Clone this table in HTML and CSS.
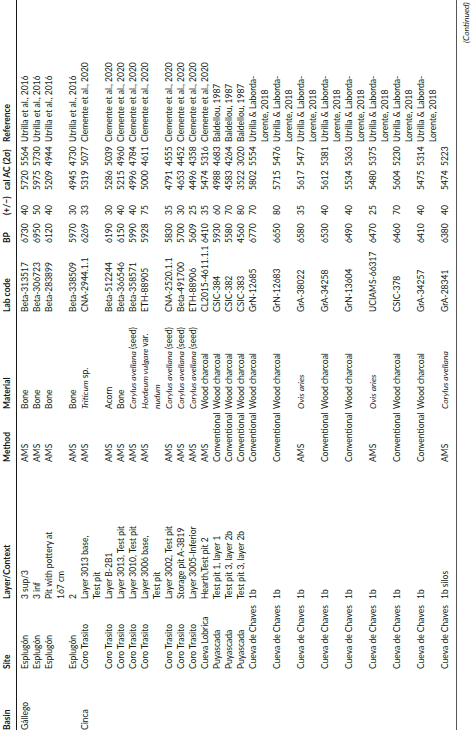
FILE: index.html
```
<!DOCTYPE html>
<html lang="en">
<head>
<meta charset="utf-8">
<title>Radiocarbon dates</title>
<link rel="stylesheet" href="styles.css">
</head>
<body>
<div class="page">
  <div class="dates">
    <div class="row head">
      <div>Basin</div><div>Site</div><div>Layer/Context</div><div>Method</div><div>Material</div><div>Lab code</div><div>BP</div><div>(+/−)</div><div class="span2">cal AC (2σ)</div><div>Reference</div>
    </div>
    <div class="row first"><div>Gállego</div><div>Esplugón</div><div>3 sup/3</div><div>AMS</div><div>Bone</div><div>Beta-313517</div><div>6730</div><div>40</div><div>5720</div><div>5564</div><div>Utrilla et al., 2016</div></div>
    <div class="row"><div></div><div>Esplugón</div><div>3 inf</div><div>AMS</div><div>Bone</div><div>Beta-306723</div><div>6950</div><div>50</div><div>5975</div><div>5730</div><div>Utrilla et al., 2016</div></div>
    <div class="row"><div></div><div>Esplugón</div><div>Pit with pottery at<br>167 cm</div><div>AMS</div><div>Bone</div><div>Beta-283899</div><div>6120</div><div>40</div><div>5209</div><div>4944</div><div>Utrilla et al., 2016</div></div>
    <div class="row"><div></div><div>Esplugón</div><div>2</div><div>AMS</div><div>Bone</div><div>Beta-338509</div><div>5970</div><div>30</div><div>4945</div><div>4730</div><div>Utrilla et al., 2016</div></div>
    <div class="row"><div>Cinca</div><div>Coro Trasito</div><div>Layer 3013 base,<br>Test pit</div><div>AMS</div><div><i>Triticum</i> sp.</div><div>CNA-2944.1.1</div><div>6269</div><div>33</div><div>5319</div><div>5077</div><div>Clemente et al., 2020</div></div>
    <div class="row"><div></div><div>Coro Trasito</div><div>Layer B-2B1</div><div>AMS</div><div>Acorn</div><div>Beta-512244</div><div>6190</div><div>30</div><div>5286</div><div>5039</div><div>Clemente et al., 2020</div></div>
    <div class="row"><div></div><div>Coro Trasito</div><div>Layer 3013, Test pit</div><div>AMS</div><div>Bone</div><div>Beta-366546</div><div>6150</div><div>40</div><div>5215</div><div>4960</div><div>Clemente et al., 2020</div></div>
    <div class="row"><div></div><div>Coro Trasito</div><div>Layer 3010, Test pit</div><div>AMS</div><div><i>Corylus avellana</i> (seed)</div><div>Beta-358571</div><div>5990</div><div>40</div><div>4996</div><div>4784</div><div>Clemente et al., 2020</div></div>
    <div class="row"><div></div><div>Coro Trasito</div><div>Layer 3006 base,<br>Test pit</div><div>AMS</div><div><i>Hordeum vulgare</i> var.<br><i>nudum</i></div><div>ETH-88905</div><div>5928</div><div>75</div><div>5000</div><div>4611</div><div>Clemente et al., 2020</div></div>
    <div class="row"><div></div><div>Coro Trasito</div><div>Layer 3002, Test pit</div><div>AMS</div><div><i>Corylus avellana</i> (seed)</div><div>CNA-2520.1.1</div><div>5830</div><div>35</div><div>4791</div><div>4555</div><div>Clemente et al., 2020</div></div>
    <div class="row"><div></div><div>Coro Trasito</div><div>Storage pit A-3B19</div><div>AMS</div><div><i>Corylus avellana</i> (seed)</div><div>Beta-491700</div><div>5700</div><div>30</div><div>4653</div><div>4452</div><div>Clemente et al., 2020</div></div>
    <div class="row"><div></div><div>Coro Trasito</div><div>Layer 3005-Inferior</div><div>AMS</div><div><i>Corylus avellana</i> (seed)</div><div>ETH-88906</div><div>5609</div><div>25</div><div>4496</div><div>4358</div><div>Clemente et al., 2020</div></div>
    <div class="row"><div></div><div>Cueva Lobrica</div><div>Hearth,Test pit 2</div><div>AMS</div><div>Wood charcoal</div><div>CL2015-4611.1.1</div><div>6410</div><div>35</div><div>5474</div><div>5316</div><div>Clemente et al., 2020</div></div>
    <div class="row"><div></div><div>Puyascada</div><div>Test pit 1, layer 1</div><div>Conventional</div><div>Wood charcoal</div><div>CSIC-384</div><div>5930</div><div>60</div><div>4988</div><div>4683</div><div>Baldellou, 1987</div></div>
    <div class="row"><div></div><div>Puyascada</div><div>Test pit 3, layer 2b</div><div>Conventional</div><div>Wood charcoal</div><div>CSIC-382</div><div>5580</div><div>70</div><div>4583</div><div>4264</div><div>Baldellou, 1987</div></div>
    <div class="row"><div></div><div>Puyascada</div><div>Test pit 3, layer 2b</div><div>Conventional</div><div>Wood charcoal</div><div>CSIC-383</div><div>4560</div><div>80</div><div>3522</div><div>3020</div><div>Baldellou, 1987</div></div>
    <div class="row"><div></div><div>Cueva de Chaves</div><div>1b</div><div>Conventional</div><div>Wood charcoal</div><div>GrN-12685</div><div>6770</div><div>70</div><div>5802</div><div>5554</div><div>Utrilla &amp; Laborda-<br>Lorente, 2018</div></div>
    <div class="row"><div></div><div>Cueva de Chaves</div><div>1b</div><div>Conventional</div><div>Wood charcoal</div><div>GrN-12683</div><div>6650</div><div>80</div><div>5715</div><div>5476</div><div>Utrilla &amp; Laborda-<br>Lorente, 2018</div></div>
    <div class="row"><div></div><div>Cueva de Chaves</div><div>1b</div><div>AMS</div><div><i>Ovis aries</i></div><div>GrA-38022</div><div>6580</div><div>35</div><div>5617</div><div>5477</div><div>Utrilla &amp; Laborda-<br>Lorente, 2018</div></div>
    <div class="row"><div></div><div>Cueva de Chaves</div><div>1b</div><div>Conventional</div><div>Wood charcoal</div><div>GrA-34258</div><div>6530</div><div>40</div><div>5612</div><div>5381</div><div>Utrilla &amp; Laborda-<br>Lorente, 2018</div></div>
    <div class="row"><div></div><div>Cueva de Chaves</div><div>1b</div><div>Conventional</div><div>Wood charcoal</div><div>GrN-13604</div><div>6490</div><div>40</div><div>5534</div><div>5363</div><div>Utrilla &amp; Laborda-<br>Lorente, 2018</div></div>
    <div class="row"><div></div><div>Cueva de Chaves</div><div>1b</div><div>AMS</div><div><i>Ovis aries</i></div><div>UCIAMS-66317</div><div>6470</div><div>25</div><div>5480</div><div>5375</div><div>Utrilla &amp; Laborda-<br>Lorente, 2018</div></div>
    <div class="row"><div></div><div>Cueva de Chaves</div><div>1b</div><div>Conventional</div><div>Wood charcoal</div><div>CSIC-378</div><div>6460</div><div>70</div><div>5604</div><div>5230</div><div>Utrilla &amp; Laborda-<br>Lorente, 2018</div></div>
    <div class="row"><div></div><div>Cueva de Chaves</div><div>1b</div><div>Conventional</div><div>Wood charcoal</div><div>GrA-34257</div><div>6410</div><div>40</div><div>5475</div><div>5314</div><div>Utrilla &amp; Laborda-<br>Lorente, 2018</div></div>
    <div class="row last"><div></div><div>Cueva de Chaves</div><div>1b silos</div><div>AMS</div><div><i>Corylus avellana</i></div><div>GrA-28341</div><div>6380</div><div>40</div><div>5474</div><div>5223</div><div></div></div>
  </div>
  <p class="continued">(Continued)</p>
</div>
</body>
</html>
```
FILE: styles.css
```
html, body {
  margin: 0;
  padding: 0;
  background: #ffffff;
}

/* The page is a table set sideways: lines run bottom-to-top, rows go left-to-right. */
.page {
  width: 474px;
  height: 732px;
  box-sizing: border-box;
  writing-mode: vertical-rl;
  text-orientation: sideways;
  transform: rotate(180deg);
  padding-block-start: 1px;
  padding-inline-start: 2px;
  font-family: "Lato", "Liberation Sans", sans-serif;
  font-size: 8.5px;
  line-height: 12px;
  color: #161616;
  overflow: hidden;
}

.dates {
  inline-size: 730px;
}

.row {
  display: grid;
  grid-template-columns: 61px 70px 137px 53px 97px 69px 28px 25px 24px 24px 1fr;
  white-space: nowrap;
}

.row > div {
  min-inline-size: 0;
}

.head {
  font-weight: 700;
  padding-block-end: 3px;
  border-block-end: 1.5px solid #1a1a1a;
}

.head .span2 {
  grid-column: span 2;
}

.first {
  padding-block-start: 1.5px;
}

.last {
  padding-block-end: 6px;
  border-block-end: 1.5px solid #555555;
}

.row i {
  font-style: italic;
}

.continued {
  margin: 0;
  margin-block-start: 2.5px;
  text-align: end;
  padding-inline-end: 2px;
  font-style: italic;
}
```
